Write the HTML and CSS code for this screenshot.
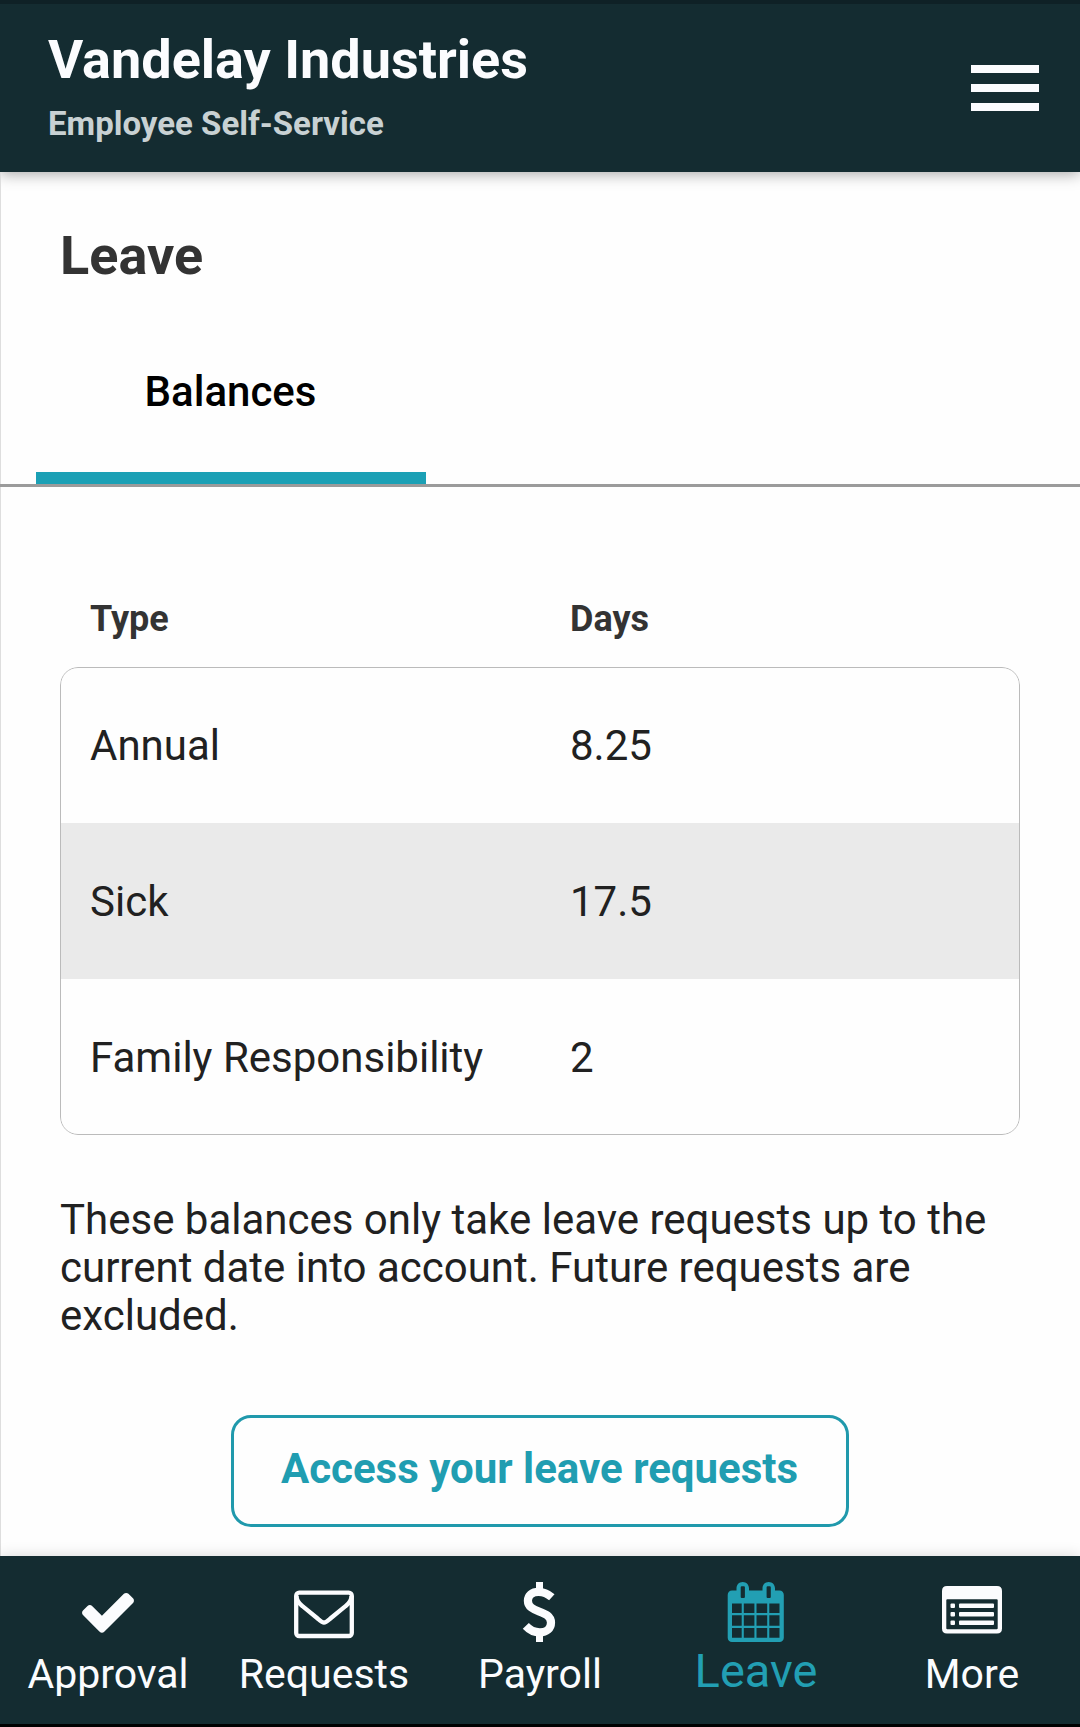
FILE: index.html
```html
<!DOCTYPE html>
<html lang="en">
<head>
    <meta charset="UTF-8">
    <meta name="viewport" content="width=device-width, initial-scale=1.0">
    <title>Leave - Employee Self-Service</title>

    <link rel="stylesheet" href="styles.css">
</head>
<body>

    <header class="header">
        <div class="brand">
            <h1 class="company">Vandelay Industries</h1>
            <p class="portal">Employee Self-Service</p>
        </div>
        <button class="menu" aria-label="Menu">
            <span class="menu-line"></span>
            <span class="menu-line"></span>
            <span class="menu-line"></span>
        </button>
    </header>

    <main class="content">
        <h2 class="page-title">Leave</h2>

        <div class="tabs">
            <a class="tab">Balances</a>
        </div>

        <div class="balances">
            <div class="balance-head">
                <span>Type</span>
                <span>Days</span>
            </div>
            <div class="balance-list">
                <div class="balance">
                    <span>Annual</span>
                    <span>8.25</span>
                </div>
                <div class="balance">
                    <span>Sick</span>
                    <span>17.5</span>
                </div>
                <div class="balance">
                    <span>Family Responsibility</span>
                    <span>2</span>
                </div>
            </div>
        </div>

        <p class="note">These balances only take leave requests up to the current date into account. Future requests are excluded.</p>

        <button class="access">Access your leave requests</button>
    </main>

    <nav class="nav">
        <a class="nav-item">
            <svg class="icon" viewBox="0 0 60 60">
                <path fill="currentColor" transform="translate(0 -0.3) scale(0.03348)" d="M1671 566q0 40-28 68l-724 724-136 136q-28 28-68 28t-68-28l-136-136-362-362q-28-28-28-68t28-68l136-136q28-28 68-28t68 28l294 295 656-657q28-28 68-28t68 28l136 136q28 28 28 68z"/>
            </svg>
            <span class="nav-label">Approval</span>
        </a>
        <a class="nav-item">
            <svg class="icon" viewBox="0 0 60 60" fill="none" stroke="currentColor" stroke-width="4.3">
                <rect x="2.2" y="10.7" width="55.6" height="43.3" rx="3"/>
                <path d="M2.5 14C2.5 18.5 5 21.5 8.5 24.2L23 36C26 38.5 28 40.5 30 40.5C32 40.5 34 38.5 37 36L51.5 24.2C55 21.5 57.5 18.5 57.5 14"/>
            </svg>
            <span class="nav-label">Requests</span>
        </a>
        <a class="nav-item">
            <svg class="icon" viewBox="0 0 60 60" fill="none" stroke="currentColor">
                <path stroke-width="7" d="M29.5 0V9M29.5 51V60"/>
                <path stroke-width="8.2" d="M41.8 15.3C37.5 11.5 33.5 9.8 28.5 9.8C22 9.8 17.9 13.5 17.9 18.7C17.9 25 23.5 27.3 29 29.5C35.5 32 41 34.2 41 40.7C41 46.5 36.5 50.4 29.8 50.4C24 50.4 19.3 47.7 15.8 43.9"/>
            </svg>
            <span class="nav-label">Payroll</span>
        </a>
        <a class="nav-item active">
            <svg class="icon" viewBox="0 0 60 60">
                <path fill="currentColor" fill-rule="evenodd" d="M6 8.6H10.5V6.4C10.5 2.8 13 0 16.7 0C20.4 0 23 2.8 23 6.4V8.6H36.5V6.4C36.5 2.8 39 0 42.7 0C46.4 0 49 2.8 49 6.4V8.6H53.5C56 8.6 57.8 10.5 57.8 13V55.7C57.8 58.2 56 60 53.5 60H6C3.5 60 1.7 58.2 1.7 55.7V13C1.7 10.5 3.5 8.6 6 8.6ZM15.7 4.3Q14.7 4.3 14.7 5.3V15Q14.7 16 15.7 16H17.9Q18.9 16 18.9 15V5.3Q18.9 4.3 17.9 4.3ZM41.6 4.3Q40.6 4.3 40.6 5.3V15Q40.6 16 41.6 16H43.8Q44.8 16 44.8 15V5.3Q44.8 4.3 43.8 4.3ZM6 21.5V31H15.7V21.5ZM17.8 21.5V31H28.4V21.5ZM30.5 21.5V31H41.2V21.5ZM43.3 21.5V31H53.5V21.5ZM6 33.2V43.8H15.7V33.2ZM17.8 33.2V43.8H28.4V33.2ZM30.5 33.2V43.8H41.2V33.2ZM43.3 33.2V43.8H53.5V33.2ZM6 46V55.7H15.7V46ZM17.8 46V55.7H28.4V46ZM30.5 46V55.7H41.2V46ZM43.3 46V55.7H53.5V46Z"/>
            </svg>
            <span class="nav-label">Leave</span>
        </a>
        <a class="nav-item">
            <svg class="icon" viewBox="0 0 60 60" fill="currentColor">
                <path fill-rule="evenodd" d="M5 4H55Q60 4 60 9V46.5Q60 51.5 55 51.5H5Q0 51.5 0 46.5V9Q0 4 5 4ZM5.3 17.2Q4.3 17.2 4.3 18.2V46.2Q4.3 47.2 5.3 47.2H54.7Q55.7 47.2 55.7 46.2V18.2Q55.7 17.2 54.7 17.2Z"/>
                <rect x="8.5" y="21.5" width="4.5" height="4.5" rx="1"/>
                <rect x="17" y="21.5" width="35" height="4.5" rx="1"/>
                <rect x="8.5" y="30" width="4.5" height="4.5" rx="1"/>
                <rect x="17" y="30" width="35" height="4.5" rx="1"/>
                <rect x="8.5" y="38.5" width="4.5" height="4.5" rx="1"/>
                <rect x="17" y="38.5" width="35" height="4.5" rx="1"/>
            </svg>
            <span class="nav-label">More</span>
        </a>
    </nav>

</body>
</html>
```

FILE: styles.css
```css
* {
    margin: 0;
    padding: 0;
    box-sizing: border-box;
}

body {
    display: flex;
    flex-direction: column;
    width: 100%;
    height: 1727px;
    font-family: Roboto, sans-serif;
    color: #212121;
    background-color: #fefefe;
}

.header {
    display: flex;
    align-items: flex-start;
    justify-content: space-between;
    height: 172px;
    padding: 26px 41px 0 48px;
    color: #fbfcfe;
    background-color: #142c31;
    border-top: 4px solid #0f2126;
    box-shadow: 0 2px 14px rgba(0, 0, 0, 0.35);
}

.company {
    font-size: 54px;
    line-height: 60px;
    margin-bottom: 14px;
}

.portal {
    font-size: 33px;
    font-weight: 700;
    line-height: 40px;
    color: #c8d1d3;
}

.menu {
    display: flex;
    flex-direction: column;
    gap: 11px;
    width: 68px;
    margin-top: 35px;
    border: none;
    background: none;
    cursor: pointer;
}

.menu-line {
    height: 8px;
    background-color: #fbfcfe;
}

.content {
    flex: 1;
    display: flex;
    flex-direction: column;
    padding-top: 54px;
    box-shadow: inset 1px 0 #dedede;
}

.page-title {
    margin-left: 60px;
    font-size: 54px;
    line-height: 60px;
    color: #333;
}

.tabs {
    display: flex;
    height: 201px;
    padding-left: 36px;
    border-bottom: 3px solid #9b9b9b;
}

.tab {
    width: 390px;
    padding: 81px 1px 0 0;
    border-bottom: 12px solid #1ba0b5;
    font-size: 42px;
    font-weight: 500;
    line-height: 50px;
    text-align: center;
    color: #000;
}

.balances {
    margin: 110px 60px 0;
}

.balance-head,
.balance {
    display: grid;
    grid-template-columns: 1fr 1fr;
    align-items: center;
}

.balance-head {
    margin-bottom: 26px;
    font-size: 36px;
    font-weight: 700;
    line-height: 44px;
    color: #333;
}

.balance-head span,
.balance span {
    padding-left: 30px;
}

.balance-list {
    position: relative;
    border-radius: 18px;
    overflow: hidden;
}

/* outline drawn over the shaded row */
.balance-list::after {
    content: "";
    position: absolute;
    inset: 0;
    border: 1px solid #bbb;
    border-radius: 18px;
    pointer-events: none;
}

.balance {
    height: 156px;
    padding-top: 1px;
    font-size: 42px;
    line-height: 50px;
}

.balance:nth-child(even) {
    background-color: #eaeaea;
}

.note {
    margin: 61px 60px 0;
    font-size: 42px;
    line-height: 48px;
}

.access {
    align-self: center;
    width: 618px;
    height: 112px;
    margin-top: 75px;
    padding: 0 1px 5px 0;
    border: 3px solid #2099ac;
    border-radius: 20px;
    background: none;
    font-family: inherit;
    font-size: 42px;
    font-weight: 700;
    color: #209db1;
    cursor: pointer;
}

.nav {
    display: flex;
    height: 171px;
    padding-top: 26px;
    background-color: #142c31;
    border-bottom: 3px solid #000;
    box-shadow: 0 0 14px rgba(0, 0, 0, 0.15);
}

.nav-item {
    flex: 1;
    display: flex;
    flex-direction: column;
    align-items: center;
    color: #fbfcfe;
}

.icon {
    width: 60px;
    height: 60px;
}

.nav-label {
    margin-top: 8px;
    font-size: 41px;
    line-height: 48px;
}

.nav-item.active {
    color: #229fb3;
}

.active .nav-label {
    margin-top: 5px;
    font-size: 47px;
}
```
